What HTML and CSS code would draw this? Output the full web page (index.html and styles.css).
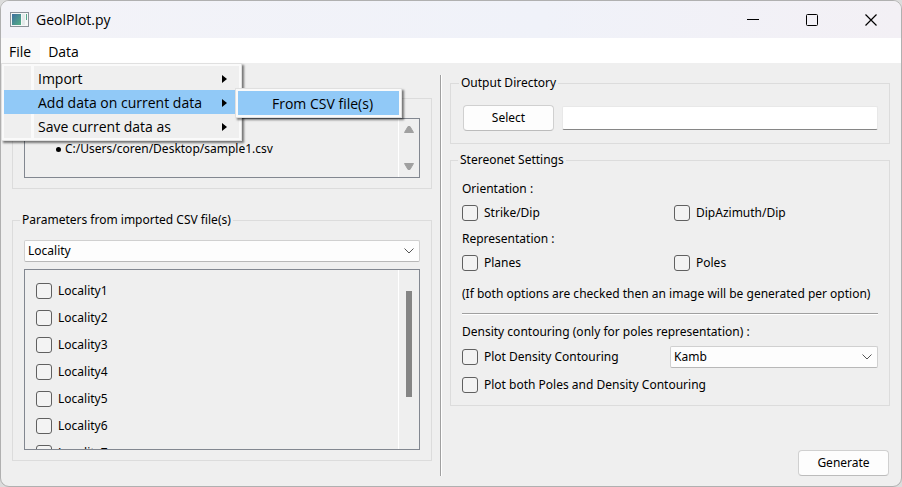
FILE: index.html
```html
<!DOCTYPE html>
<html lang="en">
<head>
<meta charset="utf-8">
<title>GeolPlot.py</title>
<link rel="stylesheet" href="styles.css">
</head>
<body>
<div class="window">
  <header class="titlebar">
    <svg class="app-icon" width="20" height="16" viewBox="0 0 20 16" aria-hidden="true">
      <defs>
        <linearGradient id="pane" x1="0" y1="0" x2="1" y2="1">
          <stop offset="0" stop-color="#3f6fa0"/>
          <stop offset="1" stop-color="#55b084"/>
        </linearGradient>
      </defs>
      <rect x="0.5" y="0.5" width="18" height="14" fill="#f6f8f8" stroke="#8c9299"/>
      <rect x="2" y="2" width="9" height="11" fill="url(#pane)"/>
      <rect x="12" y="2" width="3" height="11" fill="#e4eaea"/>
      <rect x="16" y="2" width="1" height="6" fill="#55a78a"/>
    </svg>
    <h1 class="title">GeolPlot.py</h1>
    <button class="caption" type="button" aria-label="Minimize"><svg width="12" height="12" viewBox="0 0 12 12"><path d="M0 5.5H12" stroke="#000"/></svg></button>
    <button class="caption" type="button" aria-label="Maximize"><svg width="12" height="12" viewBox="0 0 12 12"><rect x="0.5" y="0.5" width="11" height="11" rx="1" fill="none" stroke="#000"/></svg></button>
    <button class="caption" type="button" aria-label="Close"><svg width="12" height="12" viewBox="0 0 12 12"><path d="M0.5 0.5L11.5 11.5M11.5 0.5L0.5 11.5" stroke="#000" stroke-width="1.2"/></svg></button>
  </header>

  <nav class="menubar">
    <div class="menu-root">
      <button class="menu-title open" type="button">File</button>
      <div class="menu">
        <button class="menu-item" type="button">Import<svg class="arrow" width="5" height="8" viewBox="0 0 5 8"><path d="M0 0L5 4L0 8Z"/></svg></button>
        <button class="menu-item active" type="button">Add data on current data<svg class="arrow" width="5" height="8" viewBox="0 0 5 8"><path d="M0 0L5 4L0 8Z"/></svg></button>
        <button class="menu-item" type="button">Save current data as<svg class="arrow" width="5" height="8" viewBox="0 0 5 8"><path d="M0 0L5 4L0 8Z"/></svg></button>
        <div class="menu submenu">
          <button class="menu-item active" type="button">From CSV file(s)</button>
        </div>
      </div>
    </div>
    <button class="menu-title" type="button">Data</button>
  </nav>

  <main class="content">
    <section class="column left">
      <div class="group files">
        <div class="panel file-panel">
          <ul class="file-list"><li>C:/Users/coren/Desktop/sample1.csv</li></ul>
          <div class="scrollbar arrows">
            <svg width="10" height="7" viewBox="0 0 10 7"><path d="M4 0.5H6L9.5 6.5H0.5Z" fill="#a0a0a0" stroke="#a0a0a0" stroke-linejoin="round"/></svg>
            <svg width="10" height="7" viewBox="0 0 10 7"><path d="M4 6.5H6L9.5 0.5H0.5Z" fill="#a0a0a0" stroke="#a0a0a0" stroke-linejoin="round"/></svg>
          </div>
        </div>
      </div>

      <fieldset class="group parameters">
        <legend>Parameters from imported CSV file(s)</legend>
        <div class="combo">
          <select aria-label="Parameter"><option>Locality</option></select>
          <svg class="chevron" width="10" height="6" viewBox="0 0 10 6"><path d="M0.5 0.5L5 5L9.5 0.5" fill="none" stroke="#555"/></svg>
        </div>
        <div class="panel value-panel">
          <div class="value-list">
            <label class="check"><input type="checkbox">Locality1</label>
            <label class="check"><input type="checkbox">Locality2</label>
            <label class="check"><input type="checkbox">Locality3</label>
            <label class="check"><input type="checkbox">Locality4</label>
            <label class="check"><input type="checkbox">Locality5</label>
            <label class="check"><input type="checkbox">Locality6</label>
            <label class="check"><input type="checkbox">Locality7</label>
          </div>
          <div class="scrollbar"><div class="thumb"></div></div>
        </div>
      </fieldset>
    </section>

    <div class="divider"></div>

    <section class="column right">
      <fieldset class="group output">
        <legend>Output Directory</legend>
        <div class="output-row">
          <button class="push" type="button">Select</button>
          <input class="path" type="text" aria-label="Output Directory">
        </div>
      </fieldset>

      <fieldset class="group settings">
        <legend>Stereonet Settings</legend>
        <p class="line">Orientation :</p>
        <div class="pair">
          <label class="check"><input type="checkbox">Strike/Dip</label>
          <label class="check"><input type="checkbox">DipAzimuth/Dip</label>
        </div>
        <p class="line">Representation :</p>
        <div class="pair">
          <label class="check"><input type="checkbox">Planes</label>
          <label class="check"><input type="checkbox">Poles</label>
        </div>
        <p class="line note">(If both options are checked then an image will be generated per option)</p>
        <hr class="rule">
        <p class="line">Density contouring (only for poles representation) :</p>
        <div class="pair even">
          <label class="check"><input type="checkbox">Plot Density Contouring</label>
          <div class="combo">
            <select aria-label="Density method"><option>Kamb</option></select>
            <svg class="chevron" width="10" height="6" viewBox="0 0 10 6"><path d="M0.5 0.5L5 5L9.5 0.5" fill="none" stroke="#555"/></svg>
          </div>
        </div>
        <label class="check"><input type="checkbox">Plot both Poles and Density Contouring</label>
      </fieldset>

      <button class="push generate" type="button">Generate</button>
    </section>
  </main>
</div>
</body>
</html>
```
FILE: styles.css
```css
* {
  box-sizing: border-box;
}

body {
  margin: 0;
  background: #dcdcdc;
  color: #000;
  font: 12px/16px "Noto Sans", sans-serif;
}

button,
input,
select {
  margin: 0;
  font: inherit;
  color: inherit;
}

.window {
  display: flex;
  flex-direction: column;
  height: 100vh;
  border: 1px solid #b0b0b0;
  border-radius: 9px;
  background: #efefef;
}

/* Title bar */
.titlebar {
  display: flex;
  flex: none;
  align-items: center;
  height: 37px;
  padding-left: 9px;
  border-radius: 8px 8px 0 0;
  background: linear-gradient(90deg, #f3f3f8, #f0f2f9 60%, #f3f0f5);
}

.title {
  flex: 1;
  margin: 0 0 0 6px;
  font: 14px/20px "Open Sans", "Noto Sans", sans-serif;
}

.caption {
  display: grid;
  place-items: center;
  width: 59px;
  height: 100%;
  padding: 0 2px 0 0;
  border: 0;
  background: none;
}

/* Menus */
.menubar {
  display: flex;
  flex: none;
  height: 25px;
  background: #fff;
  font: 14px/24px "Open Sans", "Noto Sans", sans-serif;
}

.menu-root {
  position: relative;
  display: flex;
}

.menu-title {
  padding: 2px 8px 0;
  border: 0;
  background: none;
}

.menu-title.open {
  padding-right: 9px;
  background: #f9f9f9;
}

.menu {
  position: absolute;
  z-index: 1;
  top: 100%;
  left: 0;
  width: 241px;
  padding: 2px;
  border: 1px solid #e0e0e0;
  background: #fafafa;
  box-shadow: 2px 2px 2px rgba(0, 0, 0, 0.5);
}

.submenu {
  top: 24px;
  left: 233px;
  width: 167px;
}

.menu-item {
  display: flex;
  align-items: center;
  justify-content: space-between;
  width: 100%;
  height: 24px;
  padding: 2px 12px 0 34px;
  border: 0;
  background: linear-gradient(90deg, #efefef 27px, #fafafa 27px, #fafafa 30px, #efefef 30px);
  text-align: left;
  white-space: nowrap;
}

.menu-item.active {
  background: #91c9f7;
}

/* Main area */
.content {
  display: grid;
  flex: 1;
  grid-template-columns: minmax(0, 21fr) 2px minmax(0, 22fr);
  gap: 8px;
  min-height: 0;
  padding: 12px 11px 10px;
}

.column {
  display: flex;
  flex-direction: column;
  min-height: 0;
}

.left {
  gap: 23px;
  padding: 23px 0 15px;
}

.right {
  gap: 8px;
}

.divider {
  border-left: 1px solid #a0a0a0;
  border-right: 1px solid #fff;
}

.group {
  min-width: 0;
  margin: 0;
  padding: 0 11px;
  border: 1px solid #dcdcdc;
}

legend {
  padding: 0 2px;
  margin-left: -4px;
  line-height: 16px;
}

.panel {
  display: flex;
  border: 1px solid #828790;
  overflow: hidden;
}

.scrollbar {
  display: flex;
  flex: none;
  flex-direction: column;
  align-items: center;
  width: 21px;
  border-left: 1px solid #fff;
}

/* Imported files */
.files {
  padding: 19px 11px 10px;
}

.file-panel {
  height: 60px;
}

.file-list {
  flex: 1;
  margin: 0;
  padding: 22px 0 0 40px;
  list-style: none;
}

.file-list li {
  display: flex;
  align-items: center;
  gap: 4px;
}

.file-list li::before {
  content: "";
  width: 5px;
  height: 5px;
  margin-left: -9px;
  border-radius: 50%;
  background: #000;
}

.arrows {
  justify-content: space-between;
  padding: 7px 0;
}

/* Parameters */
.parameters {
  display: flex;
  flex: 1;
  flex-direction: column;
  min-height: 0;
  padding: 12px 11px 10px;
}

.parameters .combo {
  flex: none;
  margin-bottom: 7px;
}

.value-panel {
  flex: 1;
  min-height: 0;
}

.value-list {
  display: flex;
  flex: 1;
  flex-direction: column;
  gap: 11px;
  padding: 13px 11px 0;
}

.thumb {
  width: 6px;
  height: 106px;
  margin-top: 21px;
  background: #858585;
}

/* Controls */
.combo {
  position: relative;
  height: 22px;
}

.combo select {
  width: 100%;
  height: 100%;
  padding: 0 3px;
  border: 1px solid #d0d0d0;
  border-bottom-color: #b8b8b8;
  border-radius: 2px;
  background: #fdfdfd;
  appearance: none;
}

.chevron {
  position: absolute;
  top: 8px;
  right: 6px;
  pointer-events: none;
}

.check {
  display: flex;
  flex: none;
  align-items: center;
  gap: 6px;
  height: 16px;
}

.check input {
  flex: none;
  width: 16px;
  height: 16px;
  border: 1px solid #606060;
  border-radius: 3px;
  background: #f3f3f3;
  appearance: none;
}

.push {
  width: 91px;
  height: 26px;
  padding: 0;
  border: 1px solid #d0d0d0;
  border-bottom-color: #bcbcbc;
  border-radius: 4px;
  background: #fdfdfd;
}

/* Output directory */
.output {
  padding: 14px 11px 12px 12px;
}

.output-row {
  display: flex;
  align-items: center;
  gap: 8px;
}

.path {
  flex: 1;
  min-width: 0;
  height: 24px;
  padding: 0 4px;
  border: 1px solid #e8e8e8;
  border-bottom-color: #868686;
  border-radius: 2px;
  background: #fff;
}

/* Stereonet settings */
.settings {
  padding: 13px 11px 12px;
}

.line {
  margin: 0;
  white-space: nowrap;
}

.pair {
  display: grid;
  grid-template-columns: 1fr 1fr;
  align-items: center;
  column-gap: 8px;
  margin: 8px 0 10px;
}

.note {
  margin-top: 15px;
}

.rule {
  height: 2px;
  margin: 11px 0 9px;
  border: 0;
  border-top: 1px solid #a0a0a0;
  border-bottom: 1px solid #fff;
}

.pair.even {
  column-gap: 0;
  margin: 6px 0 9px;
}

.generate {
  align-self: flex-end;
  margin: auto 1px 0 0;
}
```
